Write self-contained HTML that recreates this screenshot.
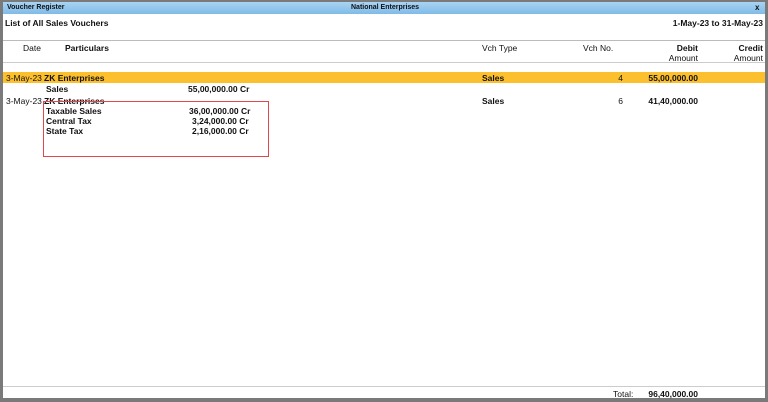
<!DOCTYPE html>
<html><head><style>
body{margin:0;width:768px;height:402px;background:#7a7a7a;overflow:hidden;font-family:"Liberation Sans",Arial,sans-serif;font-size:8.5px;color:#111}
#w{position:absolute;left:3px;top:2px;width:762px;height:396px;background:#fff}
.t{position:absolute;white-space:nowrap}
.b{font-weight:bold}
.r{text-align:right}
</style></head><body>
<div id="w">
<div style="position:absolute;left:0;top:0;width:762px;height:12px;background:linear-gradient(#a9d3f2,#7fbbe8)"></div>
<div class="t b" style="left:4px;top:2px;font-size:7px">Voucher Register</div>
<div class="t b" style="left:348px;top:2px;font-size:7px">National Enterprises</div>
<div class="t b" style="left:752px;top:1px;font-size:8px">x</div>
<div class="t b" style="left:2px;top:16px">List of All Sales Vouchers</div>
<div class="t b" style="right:2px;top:16px">1-May-23 to 31-May-23</div>
<div style="position:absolute;left:0;top:38px;width:762px;height:1px;background:#bbb"></div>
<div class="t" style="left:20px;top:41px">Date</div>
<div class="t b" style="left:62px;top:41px">Particulars</div>
<div class="t" style="left:479px;top:41px">Vch Type</div>
<div class="t" style="left:580px;top:41px">Vch No.</div>
<div class="t b r" style="right:67px;top:41px">Debit</div>
<div class="t r" style="right:67px;top:51px">Amount</div>
<div class="t b r" style="right:2px;top:41px">Credit</div>
<div class="t r" style="right:2px;top:51px">Amount</div>
<div style="position:absolute;left:0;top:60px;width:762px;height:1px;background:#ccc"></div>
<div style="position:absolute;left:0;top:70px;width:762px;height:11px;background:#fcc02e"></div>
<div class="t" style="left:3px;top:71px">3-May-23</div>
<div class="t b" style="left:41px;top:71px">ZK Enterprises</div>
<div class="t b" style="left:479px;top:71px">Sales</div>
<div class="t r" style="left:600px;width:20px;top:71px">4</div>
<div class="t b r" style="right:67px;top:71px">55,00,000.00</div>
<div class="t b" style="left:43px;top:82px">Sales</div>
<div class="t b" style="left:185px;top:82px">55,00,000.00 Cr</div>
<div class="t" style="left:3px;top:94px">3-May-23</div>
<div class="t b" style="left:41px;top:94px">ZK Enterprises</div>
<div class="t b" style="left:479px;top:94px">Sales</div>
<div class="t r" style="left:600px;width:20px;top:94px">6</div>
<div class="t b r" style="right:67px;top:94px">41,40,000.00</div>
<div style="position:absolute;left:40px;top:99px;width:224px;height:54px;border:1px solid #e04850"></div>
<div class="t b" style="left:43px;top:104px">Taxable Sales</div>
<div class="t b" style="left:186px;top:104px">36,00,000.00 Cr</div>
<div class="t b" style="left:43px;top:114px">Central Tax</div>
<div class="t b" style="left:189px;top:114px">3,24,000.00 Cr</div>
<div class="t b" style="left:43px;top:124px">State Tax</div>
<div class="t b" style="left:189px;top:124px">2,16,000.00 Cr</div>
<div style="position:absolute;left:0;top:384px;width:762px;height:1px;background:#ccc"></div>
<div class="t" style="left:610px;top:387px">Total:</div>
<div class="t b r" style="right:67px;top:387px">96,40,000.00</div>
</div>
</body></html>
